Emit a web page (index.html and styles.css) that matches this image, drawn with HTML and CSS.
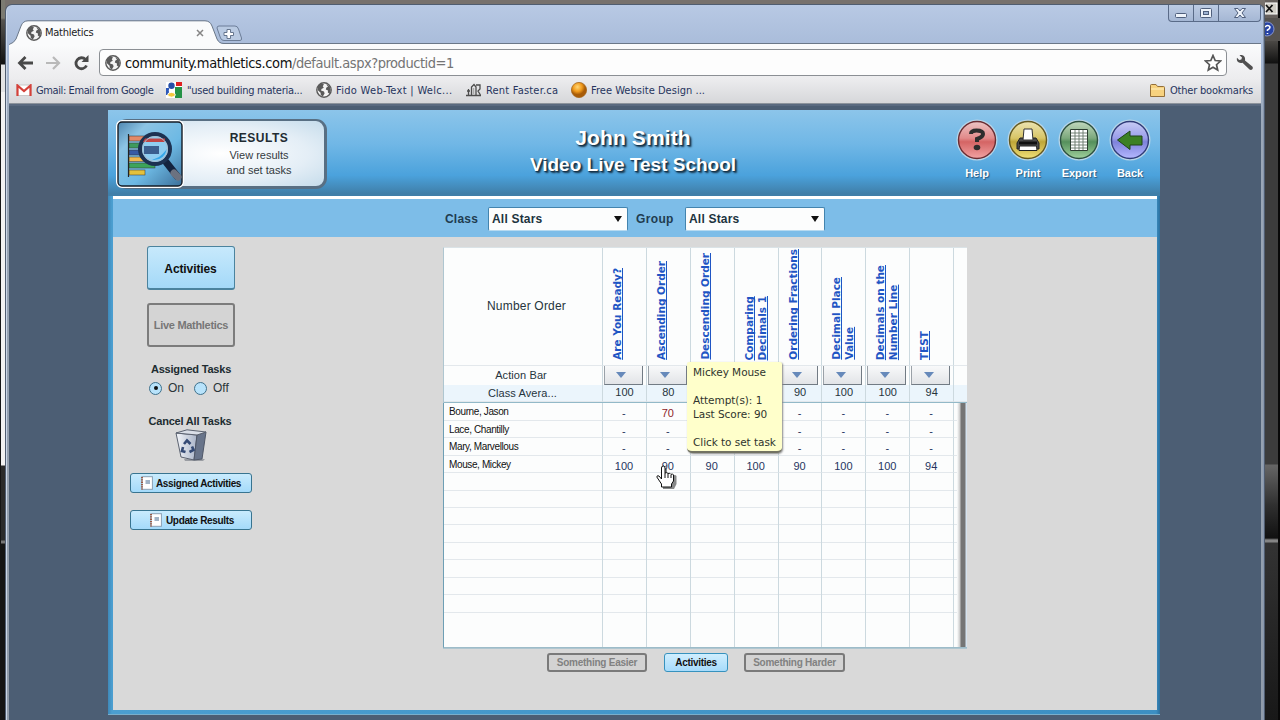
FILE: index.html
```html
<!DOCTYPE html>
<html lang="en">
<head>
<meta charset="utf-8">
<title>Mathletics</title>
<link rel="stylesheet" href="styles.css">
</head>
<body>
<svg width="0" height="0" class="defs">
  <defs>
    <symbol id="globe" viewBox="0 0 16 16">
      <circle cx="8" cy="8" r="7.2" fill="#f4f4f4" stroke="#5a5a5a" stroke-width="1.4"/>
      <path d="M2 4 L5 1.6 L8 2.3 L6.8 4.3 L7.8 5.8 L5.5 7 L5 8.6 L8 9.5 L8.6 11.5 L6.8 14.6 L4.8 13 L4.6 10.8 L1.6 8Z" fill="#5a5a5a"/>
      <path d="M10 2 L13.6 4.2 L14.8 8 L13.5 11.7 L11.8 10.5 L12 8.6 L9.8 7.4 L10.4 5.4 L12 4.8Z" fill="#5a5a5a"/>
    </symbol>
    <symbol id="note" viewBox="0 0 13 14">
      <rect x="2" y=".7" width="10.4" height="12.6" fill="#fff" stroke="#8aa0b4"/>
      <path d="M2 1V13.5" stroke="#9b5b45" stroke-width="2" stroke-dasharray="1.3 1"/>
      <path d="M5.5 5H10M5.5 7H10" stroke="#41668c"/>
    </symbol>
    <linearGradient id="g-red" x2="0" y2="1"><stop stop-color="#ecc4c4"/><stop offset=".45" stop-color="#e28a8a"/><stop offset=".55" stop-color="#d46464"/><stop offset="1" stop-color="#f2a3a3"/></linearGradient>
    <linearGradient id="g-gold" x2="0" y2="1"><stop stop-color="#ece4b2"/><stop offset=".45" stop-color="#d8c566"/><stop offset=".55" stop-color="#bfa638"/><stop offset="1" stop-color="#f0df78"/></linearGradient>
    <linearGradient id="g-green" x2="0" y2="1"><stop stop-color="#c2d8be"/><stop offset=".45" stop-color="#7ca87c"/><stop offset=".55" stop-color="#55905c"/><stop offset="1" stop-color="#9fd09c"/></linearGradient>
    <linearGradient id="g-blue" x2="0" y2="1"><stop stop-color="#c8ccf4"/><stop offset=".45" stop-color="#9a9eea"/><stop offset=".55" stop-color="#7e82da"/><stop offset="1" stop-color="#b4b8ff"/></linearGradient>
    <linearGradient id="g-tile" x2="1" y2="1"><stop stop-color="#4b82ac"/><stop offset=".25" stop-color="#8cc4e4"/><stop offset=".6" stop-color="#6db9e4"/><stop offset="1" stop-color="#3a6c96"/></linearGradient>
    <radialGradient id="g-orange" cx=".4" cy=".3"><stop stop-color="#ffd777"/><stop offset=".6" stop-color="#f09a1c"/><stop offset="1" stop-color="#a85c08"/></radialGradient>
    <linearGradient id="g-bin"><stop stop-color="#f4f6fa"/><stop offset="1" stop-color="#a9b4c8"/></linearGradient>
  </defs>
</svg>
<div class="desktop">
  <div class="desk-left"></div>
  <div class="desk-right">
    <svg width="15" height="66" viewBox="0 0 15 66">
      <rect x="0" y="3" width="12" height="11" fill="#d0cdc6" stroke="#fff"/>
      <path d="M1 5 L7.500 12 M7.500 5 L1 12" stroke="#111" stroke-width="1.800"/>
      <rect x="0" y="18" width="15" height="23" fill="#55524f"/>
      <circle cx="2" cy="29" r="7" fill="#2743a4" stroke="#8795ca"/>
      <path d="M0 27 Q3 24 5 27 Q5 29 2.500 30 V31 M2.500 33V34" stroke="#fff" stroke-width="1.600" fill="none"/>
    </svg>
  </div>
  <div class="window">
    <div class="tabstrip">
      <div class="tab">
        <svg class="tab-shape" width="1252" height="26" viewBox="0 0 1252 26">
          <path d="M0 26 V24 Q5 23 7 19 L12 6 Q14 1 19 1 H196 Q201 1 203 6 L208 19 Q210 24 215 24 H1252 V26Z" fill="#fafbfc"/>
          <path d="M0 24.500 Q5 23 7 19 L12 6 Q14 .8 19 .8 H196 Q201 .8 203 6 L208 19 Q210 23.500 215 23.500 H1252" fill="none" stroke="#6a7788"/>
        </svg>
        <svg width="16" height="16"><use href="#globe"/></svg>
        <span class="tab-title">Mathletics</span>
        <svg class="tab-close" width="8" height="8" viewBox="0 0 8 8"><path d="M1 1L7 7M7 1L1 7" stroke="#858585" stroke-width="1.500"/></svg>
      </div>
      <svg class="newtab" width="27" height="17" viewBox="0 0 27 17">
        <path d="M1 3 Q1 1 3 1 H19 Q21.500 1 22.500 4 L25.500 13 Q26 15.500 24 15.500 H8 Q5.500 15.500 4.500 13Z" fill="#b9cae2" stroke="#6c7d98"/>
        <path d="M11 4.500h3.500v3h3v3h-3v3H11v-3H8v-3h3Z" fill="#fff" stroke="#66768e"/>
      </svg>
      <div class="winbtns">
        <span><svg width="14" height="12" viewBox="0 0 14 12"><rect x="1.500" y="6.500" width="11" height="4" rx="1" fill="#eef3fa" stroke="#4f5f7c"/></svg></span>
        <span><svg width="14" height="12" viewBox="0 0 14 12"><rect x="1.500" y="1.500" width="11" height="9" rx="1" fill="#eef3fa" stroke="#4f5f7c"/><rect x="4.500" y="4.500" width="5" height="3" fill="#9fb4d4" stroke="#4f5f7c"/></svg></span>
        <span><svg width="14" height="12" viewBox="0 0 14 12"><path d="M1.500 1.500H5L7 4L9 1.500H12.500L9 6L12.500 10.500H9L7 8L5 10.500H1.500L5 6Z" fill="#eef3fa" stroke="#4f5f7c"/></svg></span>
      </div>
    </div>
    <div class="toolbar">
      <svg class="nav" width="76" height="18" viewBox="0 0 76 18">
        <path d="M9.500 3L3.500 9L9.500 15M4 9H17" fill="none" stroke="#494949" stroke-width="2.800"/>
        <path d="M37 3L43 9L37 15M42.500 9H30" fill="none" stroke="#b9b9b9" stroke-width="2.200"/>
        <path d="M69.500 5.500A5.500 5.500 0 1 0 70.500 11.500" fill="none" stroke="#494949" stroke-width="2.800"/>
        <path d="M72.500 1V8H65.500Z" fill="#494949"/>
      </svg>
      <div class="omnibox">
        <svg width="16" height="16"><use href="#globe"/></svg>
        <span class="url"><b>community.mathletics.com</b>/default.aspx?productid=1</span>
        <svg class="star" width="18" height="18" viewBox="0 0 18 18"><path d="M9 1.500L11.200 6.500L16.500 7L12.500 10.700L13.700 16L9 13.200L4.300 16L5.500 10.700L1.500 7L6.800 6.500Z" fill="#fff" stroke="#555" stroke-width="1.700"/></svg>
      </div>
      <svg class="wrench" width="18" height="17" viewBox="0 0 18 17"><path d="M3.500 1.200L6 3.500L5.300 5.500L3.200 6L1 3.800C0 7.500 3 9.800 6.500 8.700L13.500 15.500C15.500 17 18 14.500 16.300 12.500L9 6.500C9.700 2.500 7 .2 3.500 1.200Z" fill="#505050"/></svg>
    </div>
    <div class="bookmarks">
      <span class="bm bm1"><svg width="16" height="12" viewBox="0 0 16 12"><rect x="1" y="1" width="14" height="10.500" fill="#fff" stroke="#c9c9c9"/><path d="M1.500 12V1.500L8 7L14.500 1.500V12" fill="none" stroke="#d5413a" stroke-width="2.200"/></svg><i>Gmail: Email from Google</i></span>
      <span class="bm bm2"><svg width="16" height="16" viewBox="0 0 16 16"><rect width="16" height="16" fill="#fff"/><rect x="10" width="6" height="4" fill="#e02020"/><rect x="9" y="5" width="7" height="11" fill="#259246"/><rect y="6" width="3" height="7" fill="#2b58ba"/><circle cx="5.500" cy="3.800" r="2.200" fill="#264fa8" stroke="#264fa8" stroke-width="2"/><path d="M3 9.500Q6 7.500 8.500 9.500" fill="none" stroke="#fff" stroke-width="2"/><ellipse cx="5.500" cy="12.800" rx="3.800" ry="2.400" fill="#f3c83e" stroke="#fff"/></svg><i>"used building materia...</i></span>
      <span class="bm bm3"><svg width="16" height="16"><use href="#globe"/></svg><i>Fido Web-Text | Welc...</i></span>
      <span class="bm bm4"><svg width="16" height="14" viewBox="0 0 16 14"><path d="M0 12.500H15M1 8H4M2.500 6V12M5.500 12V4L8 1.500L10 4V12M10 2H14V6L12 8L14.500 12" fill="none" stroke="#4c4c4c" stroke-width="1.300"/><path d="M7.500 5V11" stroke="#aaa" stroke-width="1.500"/></svg><i>Rent Faster.ca</i></span>
      <span class="bm bm5"><svg width="16" height="16" viewBox="0 0 16 16"><circle cx="8" cy="8" r="7.600" fill="url(#g-orange)" stroke="#a4661c" stroke-width=".8"/></svg><i>Free Website Design ...</i></span>
      <span class="bm other"><svg width="15" height="13" viewBox="0 0 15 13"><path d="M.500 12V1.500Q.500.500 1.500.500H6L7.500 2.500H13.500Q14.500 2.500 14.500 3.500V12.500H.500Z" fill="#f7d27f" stroke="#94703a"/><path d="M1 5H14" stroke="#fff0c0"/></svg><i>Other bookmarks</i></span>
    </div>
    <div class="page">
      <div class="app">
        <header class="hero">
          <div class="results">
            <svg width="68" height="68" viewBox="0 0 68 68">
              <rect x="1" y="1" width="66" height="66" rx="5" fill="url(#g-tile)" stroke="#fff" stroke-width="2"/>
              <rect x="2" y="2" width="64" height="64" rx="4" fill="none" stroke="#151c26" stroke-width="1.400"/>
              <g stroke="#333" stroke-width=".5"><rect x="13" y="16" width="20" height="5" fill="#e38a68"/><rect x="13" y="23" width="16" height="5" fill="#3e9b5d"/><rect x="13" y="30" width="14" height="5" fill="#385ba5"/><rect x="13" y="37" width="17" height="4.500" fill="#f1b84d"/><rect x="13" y="43" width="26" height="5" fill="#3ca45b"/><rect x="13" y="50" width="16" height="5" fill="#e4c13c"/></g>
              <path d="M12.500 14V57" stroke="#222" stroke-width="1.200"/>
              <path d="M50 42L61 56" stroke="#14233e" stroke-width="7" stroke-linecap="round"/>
              <path d="M58 53L62 57" stroke="#6c7280" stroke-width="7" stroke-linecap="round"/>
              <circle cx="39" cy="29" r="15" fill="#8fcdf0" stroke="#1d3252" stroke-width="4"/>
              <path d="M29 18.500H49V22H27Z" fill="#bf4545"/>
              <rect x="28" y="26" width="15" height="8" fill="#3b5f8f"/>
              <path d="M36 40Q48 41 51 29Q47 34 43 37Z" fill="#36a7e8"/>
              <circle cx="39" cy="29" r="12.500" fill="none" stroke="#a6bccd"/>
            </svg>
            <div class="results-text"><strong>RESULTS</strong><span class="r1">View results</span><span class="r2">and set tasks</span></div>
          </div>
          <div class="who"><h1>John Smith</h1><h2>Video Live Test School</h2></div>
          <nav class="actions">
            <a><svg width="42" height="42" viewBox="0 0 42 42"><circle cx="21" cy="21" r="20.500" fill="#b7d5e8"/><circle cx="21" cy="21" r="18.500" fill="url(#g-red)" stroke="#6b2d33" stroke-width="1.400"/><path d="M15 15Q15 11.500 20.500 11.500Q27 11.500 27 15Q27 18 21 20V23" fill="none" stroke="#2d2d2d" stroke-width="4"/><ellipse cx="21" cy="28.500" rx="3.300" ry="2.800" fill="#2d2d2d"/></svg>Help</a>
            <a><svg width="42" height="42" viewBox="0 0 42 42"><circle cx="21" cy="21" r="20.500" fill="#b7d5e8"/><circle cx="21" cy="21" r="18.500" fill="url(#g-gold)" stroke="#64591f" stroke-width="1.400"/><path d="M13 19H29L32 24V30H10V24Z" fill="#4b4b4b" stroke="#222"/><path d="M17 10H25L26 21H16Z" fill="#fff" stroke="#333"/><path d="M12.500 27H29.500L30 31.500H12Z" fill="#fff" stroke="#222"/><path d="M12 24H30" stroke="#111" stroke-width="3"/></svg>Print</a>
            <a><svg width="42" height="42" viewBox="0 0 42 42"><circle cx="21" cy="21" r="20.500" fill="#b7d5e8"/><circle cx="21" cy="21" r="18.500" fill="url(#g-green)" stroke="#2d5140" stroke-width="1.400"/><path d="M12.500 10.500H29.500V31.500H12.500Z" fill="#fff" stroke="#2d3d30"/><path d="M13 14H29M13 17H29M13 20H29M13 23H29M13 26H29M13 29H29M17 11V31M21 11V31M25 11V31" stroke="#66766a" stroke-width=".9"/></svg>Export</a>
            <a><svg width="42" height="42" viewBox="0 0 42 42"><circle cx="21" cy="21" r="20.500" fill="#b7d5e8"/><circle cx="21" cy="21" r="18.500" fill="url(#g-blue)" stroke="#303c78" stroke-width="1.400"/><path d="M8.500 21L21 12V17H33V26H21V30.500Z" fill="#3c8024" stroke="#204418"/></svg>Back</a>
          </nav>
        </header>
        <div class="filters">
          <label class="l1">Class</label><div class="select s1">All Stars<b></b></div>
          <label class="l2">Group</label><div class="select s2">All Stars<b></b></div>
        </div>
        <div class="body">
          <aside>
            <div class="big on">Activities</div>
            <div class="big off">Live Mathletics</div>
            <div class="head h-assign">Assigned Tasks</div>
            <div class="radios"><em class="radio checked"></em><span class="on-t">On</span><em class="radio"></em><span>Off</span></div>
            <div class="head h-cancel">Cancel All Tasks</div>
            <svg class="bin" width="32" height="33" viewBox="0 0 32 33">
              <path d="M9 30H30L28 32H10Z" fill="#6f757e" opacity=".6"/>
              <path d="M1 4L22 6L19 31L6 28Z" fill="url(#g-bin)" stroke="#5b6270"/>
              <path d="M22 6L31 3L27 30L19 31Z" fill="#68748a" stroke="#4f5767"/>
              <path d="M1 4L12 .8L31 3L22 6Z" fill="#d9dee7" stroke="#5b6270"/>
              <path d="M9 15L12 11.500L15.500 15M17 17.500L18.500 21L14.500 23M10.500 23L7 22L8 18" fill="none" stroke="#344a75" stroke-width="2.600"/>
            </svg>
            <div class="wide w1"><svg width="13" height="14"><use href="#note"/></svg><span>Assigned Activities</span></div>
            <div class="wide w2"><svg width="13" height="14"><use href="#note"/></svg><span>Update Results</span></div>
          </aside>
          <main>
            <div class="grid">
              <div class="row titles"><div class="name">Number Order</div>
                <div><a>Are You Ready?</a></div><div><a>Ascending Order</a></div><div><a>Descending Order</a></div><div><a>Comparing<br>Decimals 1</a></div><div><a>Ordering Fractions</a></div><div><a>Decimal Place<br>Value</a></div><div><a>Decimals on the<br>Number Line</a></div><div><a>TEST</a></div><div></div></div>
              <div class="row bar"><div class="name">Action Bar</div><div><b></b></div><div><b></b></div><div><b></b></div><div><b></b></div><div><b></b></div><div><b></b></div><div><b></b></div><div><b></b></div><div></div></div>
              <div class="row avg"><div class="name">Class Avera...</div><div>100</div><div>80</div><div></div><div></div><div>90</div><div>100</div><div>100</div><div>94</div><div></div></div>
              <div class="rows">
                <div class="row"><div class="name">Bourne, Jason</div><div>-</div><div class="low">70</div><div></div><div></div><div>-</div><div>-</div><div>-</div><div>-</div><div></div></div>
                <div class="row"><div class="name">Lace, Chantilly</div><div>-</div><div>-</div><div></div><div></div><div>-</div><div>-</div><div>-</div><div>-</div><div></div></div>
                <div class="row"><div class="name">Mary, Marvellous</div><div>-</div><div>-</div><div></div><div></div><div>-</div><div>-</div><div>-</div><div>-</div><div></div></div>
                <div class="row"><div class="name">Mouse, Mickey</div><div>100</div><div>90</div><div>90</div><div>100</div><div>90</div><div>100</div><div>100</div><div>94</div><div></div></div>
                <div class="row fill"><div class="name"></div><div></div><div></div><div></div><div></div><div></div><div></div><div></div><div></div><div></div></div>
                <div class="scroll"></div>
              </div>
              <div class="tip">Mickey Mouse<br><br>Attempt(s): 1<br>Last Score: 90<br><br>Click to set task</div>
              <svg class="hand" width="22" height="26" viewBox="0 0 22 26">
                <path d="M9 4Q9 2 7 2T5.500 4V15L3 12Q1 11 .800 13L5 20V23H16L18.500 18V10Q17 8 15 10Q14 7.500 12 9Q11 7 9 8Z" transform="translate(2 1)" fill="#555" opacity=".7"/>
                <path d="M9 3Q9 1 7.200 1T5.500 3V14L3 11Q1 10 .800 12L5.500 19V22H15.500V19L17.500 16V10Q16.500 8 15 9.500Q14 7.500 12 8.500Q11 7 9 8Z" fill="#fff" stroke="#111"/>
                <path d="M9 8V13M12 9V13M15 10V13" stroke="#111"/>
              </svg>
            </div>
            <div class="levels"><span class="lv dim a">Something Easier</span><span class="lv b">Activities</span><span class="lv dim c">Something Harder</span></div>
          </main>
        </div>
      </div>
    </div>
  </div>
</div>
</body>
</html>
```
FILE: styles.css
```css
* { box-sizing: border-box; }
body { margin: 0; font-family: "Liberation Sans", Arial, sans-serif; }
svg { display: block; flex: none; }
.defs { position: absolute; }
i, em { font-style: normal; }
.desktop { position: relative; width: 1280px; height: 720px; overflow: hidden; background: #77716d; padding: 4px 15px 0 5px; }
.desk-left { position: absolute; left: 0; top: 0; width: 5px; height: 720px; background: linear-gradient(90deg, #151515 1px, transparent 1px), linear-gradient(#7c7b72 0 18px, #55534f 20px, #111 64px, #e2e3e4 65px 92px, #f2f2f2 92px 465px, #2b2b2b 466px 540px, #777 541px 543px, #151515 544px); }
.desk-right { position: absolute; left: 1265px; top: 0; width: 15px; height: 720px; background: linear-gradient(90deg, transparent 13px, #080808 13px), linear-gradient(#66605d 0 17px, #4b4845 41px, #111 63px, #3c3c3c 64px, #3c3c3c 464px, #666 465px, #303030 505px, #111 538px, #858585 540px 542px, #333 543px, #181818); }
.window { position: relative; height: 716px; border: 1px solid #505d70; border-width: 1px 1px 0; border-radius: 7px 7px 0 0; padding: 0 3px; display: flex; flex-direction: column; box-shadow: inset 1px 0 #cbd7e8, inset -1px 0 #8897ae; background: linear-gradient(#b8c9e4, #a9bcda 40px, #9ba7b7 120px, #909ba9); }
.tabstrip { height: 40px; display: flex; align-items: flex-start; }
.tab { position: relative; width: 211px; height: 25px; margin-top: 15px; padding: 0 0 0 17px; display: flex; align-items: center; }
.tab > * { position: relative; }
.tab > .tab-shape { position: absolute; left: 0; top: 0; width: 1252px; height: 26px; }
.tab-title { font: 11px "DejaVu Sans Condensed", "DejaVu Sans", sans-serif; letter-spacing: -.25px; margin-left: 3px; width: 151px; color: #222; }
.newtab { margin: 20px 0 0 -4px; z-index: 1; }
.winbtns { margin: 0 0 0 auto; height: 17px; width: 93px; display: flex; border: 1px solid #5a6b88; border-top: 0; border-radius: 0 0 4px 4px; background: linear-gradient(#bccbe3, #a5b7d4); }
.winbtns span { width: 25px; display: flex; justify-content: center; align-items: center; border-right: 1px solid #5a6b88; }
.winbtns span:last-child { flex: 1; border: 0; }
.toolbar { position: relative; height: 34px; display: flex; align-items: center; background: linear-gradient(#fafbfc, #ececee); padding: 1px 0 0 6px; }
.nav { margin: 0 7px 0 1px; }
.omnibox { width: 1128px; height: 27px; display: flex; align-items: center; border: 1px solid #8b8f94; border-radius: 4px; background: #fdfdfd; padding: 0 4px 0 5px; }
.url { font: 14.500px "DejaVu Sans Condensed", "DejaVu Sans", sans-serif; color: #747474; margin-left: 4px; letter-spacing: -.46px; white-space: nowrap; }
.url b { font-weight: 400; color: #111; letter-spacing: -.38px; }
.star { margin-left: auto; }
.wrench { margin-left: 9px; }
.bookmarks { height: 25px; display: flex; align-items: center; background: linear-gradient(#ececee, #d6d7da); border-bottom: 1px solid #8c939c; padding: 0 8px 2px 7px; font: 11px "DejaVu Sans Condensed", "DejaVu Sans", sans-serif; color: #27355e; }
.bm { display: flex; align-items: center; gap: 4px; white-space: nowrap; letter-spacing: .03px; flex: none; }
.bm1 { width: 150px; letter-spacing: -.4px; }
.bm2 { width: 150px; gap: 5px; letter-spacing: -.28px; }
.bm3 { width: 150px; letter-spacing: .3px; }
.bm4 { width: 105px; letter-spacing: .2px; }
.other { margin-left: auto; gap: 5px; letter-spacing: -.2px; }
.other { width: 103px; letter-spacing: -.2px; }
.page { flex: 1; background: #4c5e74; padding: 4px 101px 0 99px; border-top: 2px solid #5a6a80; }
.app { height: 605px; width: 1052px; background: linear-gradient(90deg, #3e88b8, #4b9ed0 4px, #3c8fc3 1048px, #2c6f9e); border-bottom: 1px solid #79aecb; }
.hero { height: 86px; background: linear-gradient(#8cc5ea, #70b7e6 40%, #4ba2dc 76%, #407fa9 97%); display: flex; }
.results { width: 211px; height: 70px; margin: 9px 0 0 8px; display: flex; border: solid #586f83; border-width: 2px 3px 3px 1px; border-radius: 11px; background: radial-gradient(#fff, #e4eef6 60%, #c5dceb); }
.results svg { margin: -1px 0 0 -1px; }
.results-text { flex: 1; display: flex; flex-direction: column; align-items: center; padding: 10px 0 0 10px; color: #333a40; font-size: 11px; line-height: 15px; }
.results-text strong { font-size: 12px; letter-spacing: .5px; line-height: 14px; margin-bottom: 3px; color: #222b32; }
.who { width: 602px; margin-left: 5px; text-align: center; color: #fff; text-shadow: 2px 2px 2px #173348, 1px 1px 1px #173348; }
.who h1 { margin: 15px 0 0; font-size: 21px; line-height: 25px; letter-spacing: .1px; }
.who h2 { margin: 2px 0 0; font-size: 19px; line-height: 25px; }
.actions { display: flex; gap: 9px; margin: 9px 0 0 22px; color: #fff; font-weight: 700; font-size: 11px; letter-spacing: -.05px; text-shadow: 1px 1px 1px #285b83; }
.actions a { width: 42px; display: flex; flex-direction: column; align-items: center; gap: 6px; }
.filters { width: 1044px; height: 41px; margin-left: 5px; border-top: 3px solid #fff; background: #7dbde8; display: flex; align-items: center; color: #1f3c50; font-size: 12px; font-weight: 700; padding: 3px 0 2px 332px; }
.l1 { width: 33px; letter-spacing: .2px; }
.l2 { width: 39px; letter-spacing: .35px; margin-left: 8px; }
.select { width: 140px; height: 24px; background: #fcfdfd; border: 1px solid #4384ae; border-bottom-color: #b7daf0; border-radius: 2px; padding: 0 5px 0 3px; display: flex; align-items: center; justify-content: space-between; letter-spacing: .2px; color: #20333e; }
.select b { border: 4px solid transparent; border-top: 6px solid #111; border-bottom: 0; }
.s1, .s2 { margin-left: 10px; }
.body { width: 1044px; height: 473px; margin-left: 5px; background: #d9d9d9; display: flex; }
aside { width: 330px; }
.big { width: 88px; height: 44px; margin-left: 34px; display: flex; align-items: center; justify-content: center; font-weight: 700; border-radius: 3px; }
.on { margin-top: 9px; font-size: 12px; border: 1px solid #4b839e; background: linear-gradient(#c7e9fc, #a4d9f8); color: #101010; padding: 2px 1px 0 0; border-bottom-width: 2px; letter-spacing: -.1px; }
.off { margin-top: 13px; font-size: 11px; border: 2px solid #7c7c7c; color: #777; background: #d4d4d4; letter-spacing: -.3px; white-space: nowrap; }
.head { font-weight: 700; font-size: 11px; color: #202c30; line-height: 14px; width: 100px; margin-left: 28px; text-align: center; white-space: nowrap; letter-spacing: -.2px; }
.h-assign { margin-top: 15px; }
.radios { display: flex; align-items: center; height: 14px; margin: 5px 0 0 36px; font-size: 12px; color: #2b3538; }
.radio { width: 13px; height: 13px; border-radius: 50%; border: 1px solid #3f718c; background: #b8e3fb; display: flex; align-items: center; justify-content: center; margin-right: 6px; }
.checked::after { content: ""; width: 4px; height: 4px; border-radius: 50%; background: #111; }
.on-t { width: 26px; }
.h-cancel { margin-top: 19px; margin-left: 27px; }
.bin { margin: 1px 0 0 62px; }
.wide { width: 122px; height: 20px; margin-left: 17px; border: 1px solid #387490; border-radius: 3px; background: linear-gradient(#c9ebfd, #a4dafa); display: flex; align-items: center; font-size: 10px; font-weight: 700; color: #111; white-space: nowrap; }
.w1 { margin-top: 11px; padding-left: 9px; gap: 3px; letter-spacing: -.36px; }
.w2 { margin-top: 17px; padding-left: 18px; gap: 4px; }
.w2 span { letter-spacing: -.35px; }
main { width: 524px; padding-top: 10px; }
.grid { position: relative; height: 402px; background: #fcfdfd; border: 1px solid #afc6d0; border-top-color: #dae3e7; border-right: 0; color: #26343c; font-size: 11px; display: flex; flex-direction: column; }
.row { display: grid; grid-template-columns: 159px repeat(8, 43.900px) 13px; height: 17.600px; line-height: 17px; }
.row > div { border-right: 1px solid #ccd9df; border-bottom: 1px solid #e3e8ec; text-align: center; }
.row > div:last-child { border-right: 0; }
.titles { height: 118px; }
.titles .name { font-size: 12px; line-height: 117px; padding-left: 7px; letter-spacing: .2px; }
.titles > div:not(.name) { display: flex; align-items: flex-end; padding: 0 0 5px 8px; }
.titles a { writing-mode: vertical-rl; transform: rotate(180deg); text-align: left; font: bold 10.500px/13px "DejaVu Sans", sans-serif; color: #1f55c4; text-decoration: underline; text-decoration-thickness: 1px; text-underline-position: from-font; text-underline-offset: -1px; text-decoration-skip-ink: none; white-space: nowrap; }
.bar { height: 19px; }
.avg { height: 18px; background: #ebf5fc; border-bottom: 1px solid #92b9c8; }
.bar .name { line-height: 19px; padding-right: 4px; letter-spacing: .1px; }
.avg .name { line-height: 17px; letter-spacing: .1px; padding-right: 1px; }
.avg > div { height: 17px; }
.bar > div:not(.name):not(:last-child) { padding: 0 3px 0 1px; }
.bar b { display: flex; justify-content: center; align-items: center; height: 19px; background: linear-gradient(#f8f9fa, #e2e4e7); border: solid #727b84; border-width: 0 1px 1px 1px; border-left-color: #9aa1a8; padding: 0 4px 1px 0; }
.bar b::after { content: ""; border: 5.500px solid transparent; border-top: 6px solid #6689ba; border-bottom: 0; }
.avg > div:not(.name) { font-size: 11px; line-height: 15px; }
.rows { position: relative; flex: 1; display: flex; flex-direction: column; border-left: 1px solid #6e9fb5; margin-left: -1px; border-bottom: 1px solid #9dbcc9; }
.rows .row > div { color: #26355f; line-height: 21px; height: 17.600px; }
.rows .row > div:not(.name) { padding-right: 1px; }
.rows .row > div.name { text-align: left; font-size: 10px; color: #111; padding-left: 5px; line-height: 18px; letter-spacing: -.38px; }
.rows .row > div.low { color: #8f2528; }
.rows .fill { flex: 1; height: auto; background: repeating-linear-gradient(transparent 0 16.500px, #e3e8ec 16.500px 17.500px); }
.rows .fill > div { height: auto; border-bottom: 0; }
.scroll { position: absolute; right: 0; top: 0; bottom: 0; width: 10px; background: linear-gradient(90deg, #fcfdfd, #c9c9c9 3px, #757575 4px 8px, #d5e2ee 9px); }
.tip { position: absolute; left: 243px; top: 114px; width: 95px; height: 91px; padding: 3px 0 0 6px; background: #ffffcb; border-radius: 2px 2px 5px 5px; border-bottom: 2px solid #727262; box-shadow: 1px 1px 2px #888; font: 10.500px/14px "DejaVu Sans", sans-serif; color: #30352e; white-space: nowrap; letter-spacing: -.05px; }
.hand { position: absolute; left: 212px; top: 217px; }
.levels { display: flex; padding: 4px 0 0 104px; }
.lv { height: 19px; display: flex; align-items: center; justify-content: center; border: 1px solid #3792be; border-radius: 3px; background: linear-gradient(#d0eefe, #a6dbfb); font-size: 10px; font-weight: 700; color: #111; white-space: nowrap; letter-spacing: -.3px; }
.dim { border: 2px solid #7a7a7a; background: #d3d3d3; color: #818181; letter-spacing: -.25px; }
.a { width: 100px; } .b { width: 64px; margin: 0 16px 0 17px; } .c { width: 101px; }
```
